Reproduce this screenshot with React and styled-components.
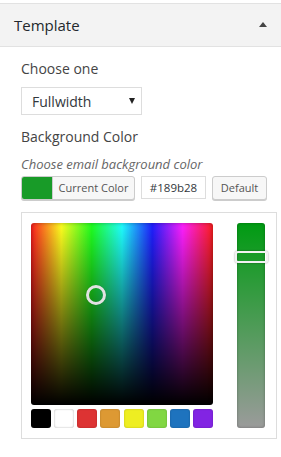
import React from 'react';
import styled, { createGlobalStyle } from 'styled-components';

const Global = createGlobalStyle`
    body {
        margin: 0;
        background: #fff;
        font-family: "Open Sans", "Liberation Sans", sans-serif;
        color: #444;
    }
`;

const swatches = ['#000000', '#ffffff', '#dd3333', '#dd9933', '#eeee22', '#81d742', '#1e73be', '#8224e3'];

const App = () => {
    return(
        <>
            <Global />
            <Panel>
                <Header>
                    <HeaderTitle>Template</HeaderTitle>
                    <UpArrow />
                </Header>
                <Body>
                    <Label>Choose one</Label>
                    <Select>
                        <span>Fullwidth</span>
                        <DownArrow />
                    </Select>
                    <Label top={12}>Background Color</Label>
                    <Description>Choose email background color</Description>
                    <ButtonRow>
                        <ColorButton>
                            <Swatch color='#189b28' />
                            <ButtonText>Current Color</ButtonText>
                        </ColorButton>
                        <HexInput>#189b28</HexInput>
                        <SmallButton>Default</SmallButton>
                    </ButtonRow>
                    <Picker>
                        <LeftCol>
                            <Square>
                                <Circle />
                            </Square>
                            <Palette>
                                {swatches.map(c => <PaletteItem key={c} color={c} light={c === '#ffffff'} />)}
                            </Palette>
                        </LeftCol>
                        <Strip>
                            <Handle />
                        </Strip>
                    </Picker>
                </Body>
            </Panel>
        </>
    )
}
export default App;

const Panel = styled.div`
    padding-top: 3px;
    width: 281px;
`;

const Header = styled.div`
    height: 42px;
    border-top: 1px solid #e2e2e2;
    border-bottom: 1px solid #e2e2e2;
    background: #f3f3f3;
    display: flex;
    align-items: center;
    justify-content: space-between;
    padding: 0 14px;
`;

const HeaderTitle = styled.div`
    font-size: 15px;
    color: #23282d;
    margin-top: -1px;
`;

const UpArrow = styled.div`
    width: 0;
    height: 0;
    margin-top: -1px;
    border-left: 4px solid transparent;
    border-right: 4px solid transparent;
    border-bottom: 5px solid #444;
`;

const Body = styled.div`
    padding: 12px 4px 0 21px;
`;

const Label = styled.div`
    font-size: 14px;
    font-weight: 500;
    line-height: 20px;
    color: #444;
    margin-top: ${({top}) => top || 0}px;
`;

const Select = styled.div`
    margin-top: 8px;
    width: 121px;
    height: 28px;
    box-sizing: border-box;
    border: 1px solid #ddd;
    display: flex;
    align-items: center;
    justify-content: space-between;
    padding: 0 6px 0 10px;
    font-size: 14px;
    color: #32373c;
`;

const DownArrow = styled.div`
    width: 0;
    height: 0;
    border-left: 3.5px solid transparent;
    border-right: 3.5px solid transparent;
    border-top: 6px solid #222;
`;

const Description = styled.div`
    margin-top: 8px;
    font-size: 13px;
    font-style: italic;
    line-height: 18px;
    color: #666;
`;

const ButtonRow = styled.div`
    margin-top: 3px;
    display: flex;
    align-items: flex-start;
    gap: 6px;
`;

const ColorButton = styled.div`
    width: 114px;
    height: 24px;
    box-sizing: border-box;
    border: 1px solid #ccc;
    border-radius: 3px;
    background: #f7f7f7;
    box-shadow: 0 1px 0 #ccc;
    display: flex;
    overflow: hidden;
`;

const Swatch = styled.div`
    width: 30px;
    background: ${({color}) => color};
`;

const ButtonText = styled.div`
    flex: 1;
    border-left: 1px solid #ccc;
    font-size: 11px;
    line-height: 22px;
    text-align: center;
    color: #555;
`;

const HexInput = styled.div`
    width: 65px;
    height: 23px;
    box-sizing: border-box;
    border: 1px solid #ddd;
    font-size: 11.5px;
    line-height: 21px;
    text-align: center;
    color: #32373c;
`;

const SmallButton = styled.div`
    width: 55px;
    height: 24px;
    box-sizing: border-box;
    border: 1px solid #ccc;
    border-radius: 3px;
    background: #f7f7f7;
    box-shadow: 0 1px 0 #ccc;
    font-size: 11px;
    line-height: 22px;
    text-align: center;
    color: #555;
`;

const Picker = styled.div`
    margin-top: 12px;
    width: 256px;
    box-sizing: border-box;
    border: 1px solid #ddd;
    padding: 10px 11px 10px 9px;
    display: flex;
    gap: 24px;
`;

const LeftCol = styled.div`
    width: 182px;
    display: flex;
    flex-direction: column;
    gap: 4px;
`;

const Square = styled.div`
    position: relative;
    width: 182px;
    height: 182px;
    border-radius: 3px;
    background:
        linear-gradient(to bottom, rgba(0,0,0,0), #000),
        linear-gradient(rgba(255,255,255,0.12), rgba(255,255,255,0.12)),
        linear-gradient(to right, #f00, #ff0, #0f0, #0ff, #00f, #f0f, #f00);
    box-shadow: inset 0 0 4px rgba(0,0,0,0.35);
`;

const Circle = styled.div`
    position: absolute;
    left: 55px;
    top: 62px;
    width: 20px;
    height: 20px;
    box-sizing: border-box;
    border-radius: 50%;
    border: 3px solid #e2e2e2;
    box-shadow: 0 0 1px rgba(0,0,0,0.3);
`;

const Palette = styled.div`
    display: flex;
    justify-content: space-between;
`;

const PaletteItem = styled.div`
    width: 20px;
    height: 19px;
    box-sizing: border-box;
    border-radius: 3px;
    background: ${({color}) => color};
    box-shadow: inset 0 0 2px ${({light}) => light ? 'rgba(0,0,0,0.35)' : 'rgba(0,0,0,0.25)'};
`;

const Strip = styled.div`
    position: relative;
    width: 28px;
    border-radius: 3px;
    background: linear-gradient(to bottom, #009b12, #9b9b9b);
    box-shadow: inset 0 0 3px rgba(0,0,0,0.3);
`;

const Handle = styled.div`
    position: absolute;
    left: -2px;
    right: -3px;
    top: 28px;
    height: 12px;
    box-sizing: border-box;
    border: 2px solid #f2f2f2;
    border-radius: 3px;
    box-shadow: 0 0 2px rgba(0,0,0,0.45);
`;
